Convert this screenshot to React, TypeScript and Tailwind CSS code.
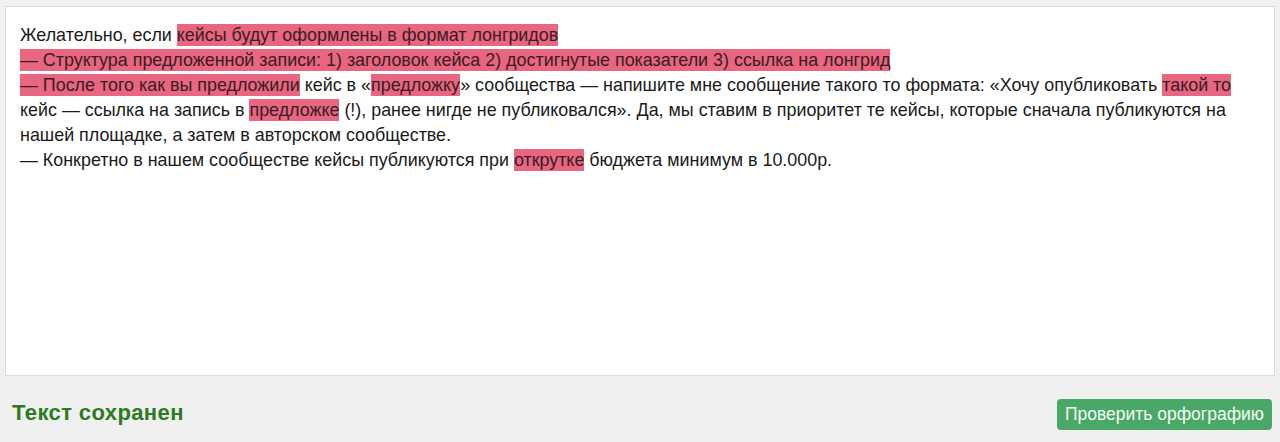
import React from 'react';

const Mark = ({ children }: { children: React.ReactNode }) => (
  <span className="bg-[#e8667f] text-[#3a1c24] py-[1px]">{children}</span>
);

export default function App() {
  return (
    <div className="w-[1280px] h-[442px] bg-[#f0f0f0] flex flex-col font-['Liberation_Sans',Arial,sans-serif]">
      {/* Editor */}
      <div className="mx-[5px] mt-[6px] h-[370px] bg-white border border-[#dadada] pl-[14px] pr-[28px] pt-[16px] text-[17.9px] leading-[25px] text-[#1a1a1a]">
        <p>
          Желательно, если <Mark>кейсы будут оформлены в формат лонгридов</Mark>
          <br />
          <Mark>— Структура предложенной записи: 1) заголовок кейса 2) достигнутые показатели 3) ссылка на лонгрид</Mark>
          <br />
          <Mark>— После того как вы предложили</Mark> кейс в «<Mark>предложку</Mark>» сообщества — напишите мне сообщение такого то формата: «Хочу опубликовать <Mark>такой то</Mark> кейс — ссылка на запись в <Mark>предложке</Mark> (!), ранее нигде не публиковался». Да, мы ставим в приоритет те кейсы, которые сначала публикуются на нашей площадке, а затем в авторском сообществе.
          <br />
          — Конкретно в нашем сообществе кейсы публикуются при <Mark>открутке</Mark> бюджета минимум в 10.000р.
        </p>
      </div>

      {/* Footer */}
      <div className="flex items-center justify-between pl-[12px] pr-[8px] mt-[23px]">
        <span className="text-[22px] tracking-[0.4px] font-bold text-[#2c7a22] -mt-[4px]">Текст сохранен</span>
        <button className="h-[31px] px-[8px] rounded-[4px] bg-[#4aa867] text-[#f5fff7] text-[17.5px]">
          Проверить орфографию
        </button>
      </div>
    </div>
  );
}
